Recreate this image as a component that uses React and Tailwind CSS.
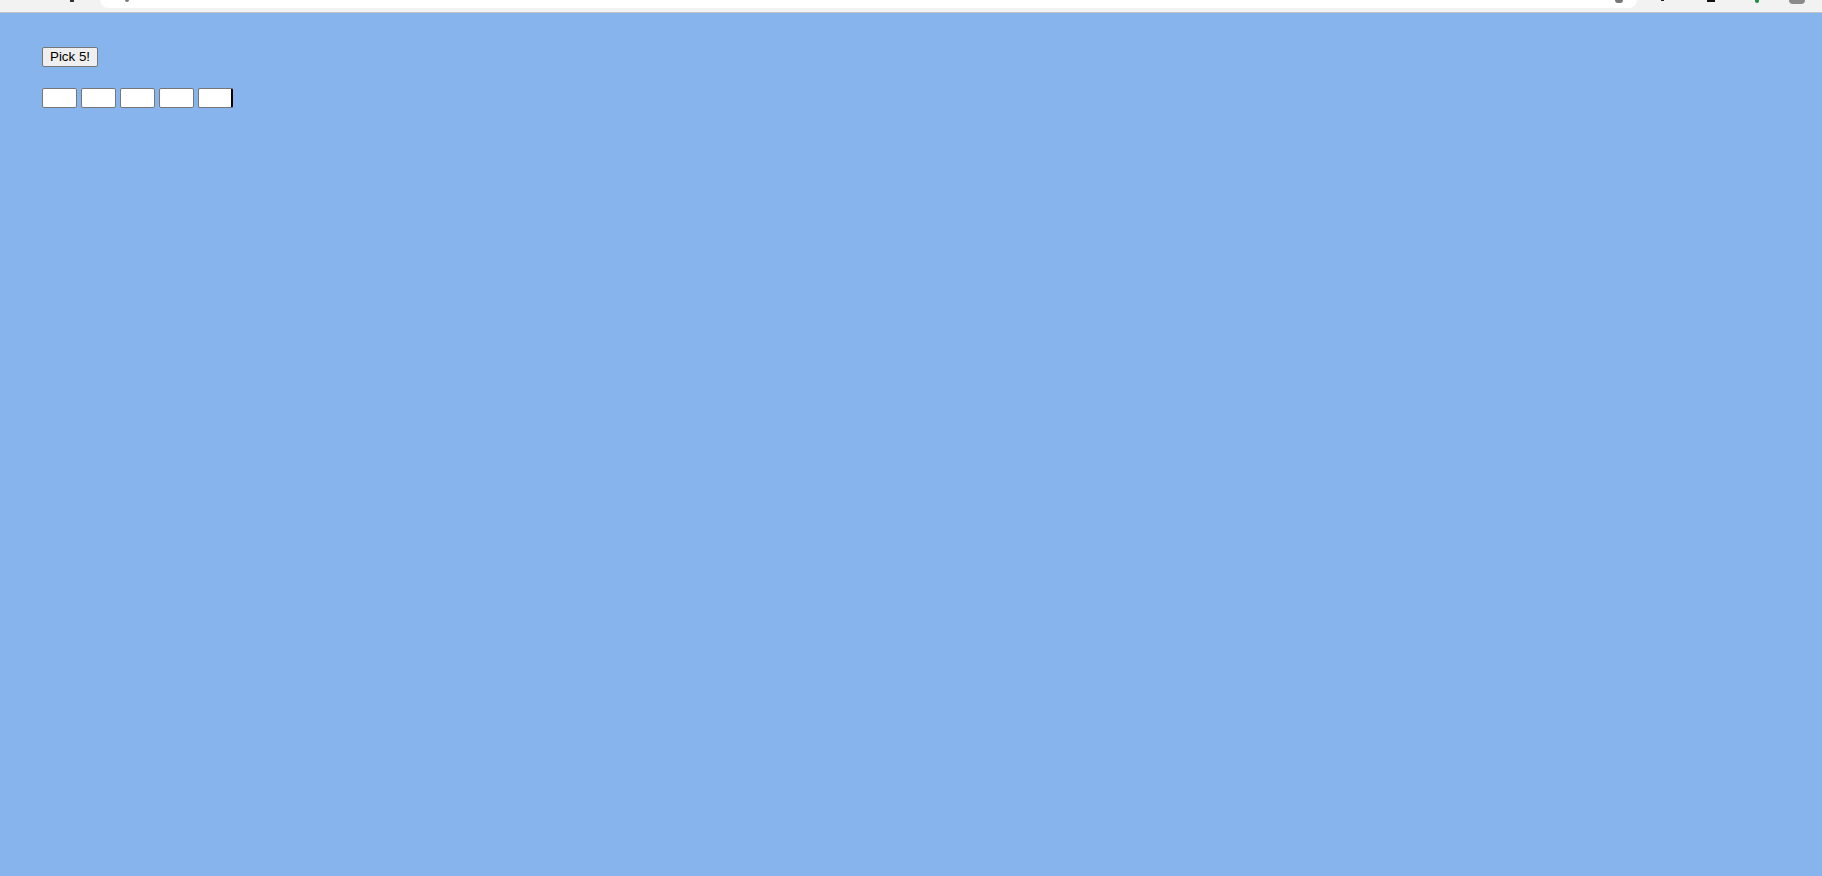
import { useState } from 'react';

// thin slice of browser chrome visible above the page
function BrowserStrip() {
  return (
    <div className="h-[13px] shrink-0 bg-[#f2f2f2] border-b border-[#c4c4c4] flex items-start overflow-hidden">
      <div className="w-[70px]" />
      <div className="w-[4px] h-[2px] bg-[#333]" />
      <div className="w-[26px]" />
      <div className="w-[1537px] h-[8px] bg-white rounded-b-[14px] flex items-start">
        <div className="w-[25px]" />
        <div className="w-[4px] h-[2px] bg-[#777] rounded-b" />
        <div className="flex-1" />
        <div className="w-[8px] h-[3px] bg-[#777] rounded-b-full" />
        <div className="w-[14px]" />
      </div>
      <div className="w-[24px]" />
      <div className="w-[3px] h-[1px] bg-[#222]" />
      <div className="w-[43px]" />
      <div className="w-[8px] h-[2px] bg-[#111]" />
      <div className="w-[40px]" />
      <div className="w-[4px] h-[3px] bg-[#1e8e3e] rounded-b-full" />
      <div className="w-[30px]" />
      <div className="w-[16px] h-[4px] bg-[#8a8a8a] rounded-b-full" />
    </div>
  );
}

export default function App() {
  const [nums, setNums] = useState(['', '', '', '', '']);

  const pick = () => {
    const pool = Array.from({ length: 50 }, (_, i) => i + 1);
    const picked = [];
    for (let i = 0; i < 5; i++) {
      const idx = Math.floor(Math.random() * pool.length);
      picked.push(String(pool.splice(idx, 1)[0]));
    }
    setNums(picked);
  };

  return (
    <div className="min-h-screen flex flex-col bg-[#87b4ec] font-['Liberation_Sans',Arial,sans-serif]">
      <BrowserStrip />
      <div className="pt-[34px] pl-[42px] flex flex-col items-start">
        <button
          type="button"
          onClick={pick}
          className="w-[56px] h-[20px] flex items-center justify-center text-[13.333px] leading-[16px] text-black bg-[#efefef] border border-[#767676] rounded-[2px]"
        >
          Pick 5!
        </button>
        <div className="mt-[21px] flex gap-[4px]">
          {nums.map((n, i) => (
            <input
              key={i}
              readOnly
              value={n}
              className={`w-[35px] h-[20px] bg-white border border-[#767676] rounded-[2px] text-[13.333px] px-[2px] outline-none ${i === 4 ? 'border-r-black border-r-2' : ''}`}
            />
          ))}
        </div>
      </div>
    </div>
  );
}
